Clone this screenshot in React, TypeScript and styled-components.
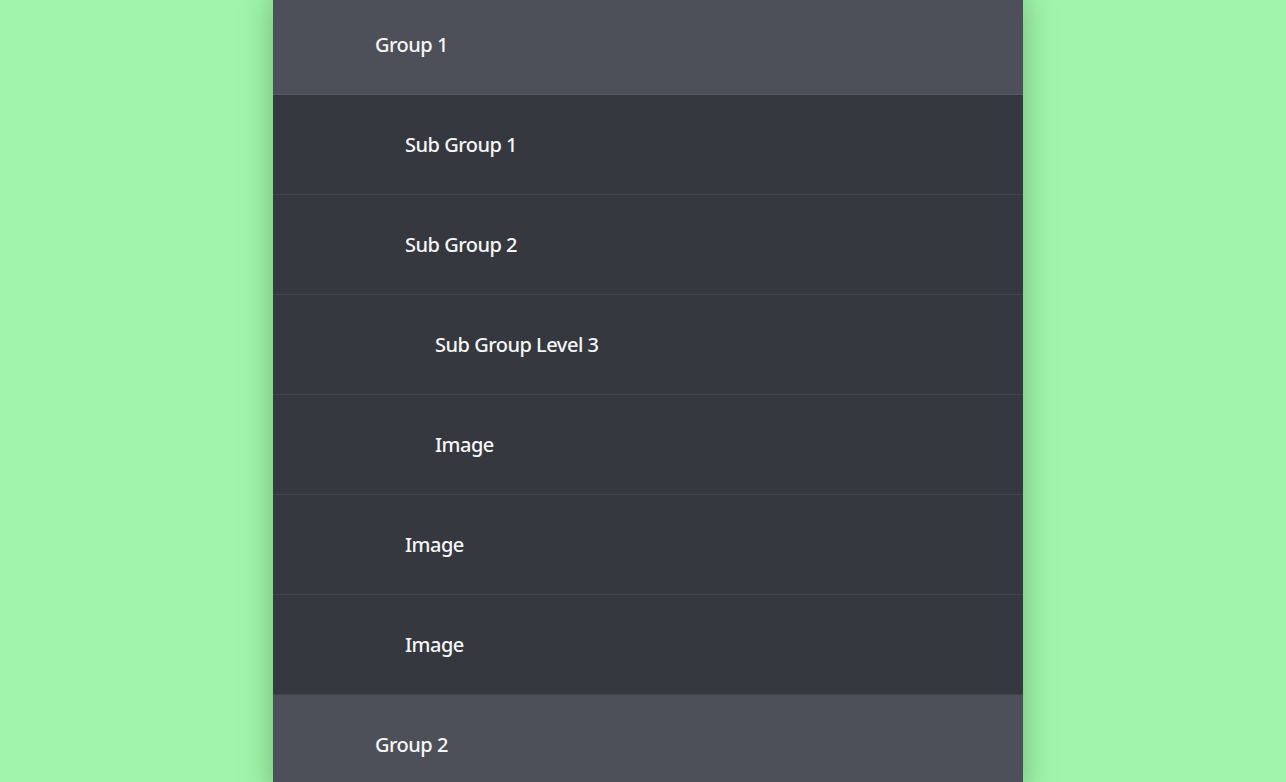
import React from "react";
import styled, { createGlobalStyle } from "styled-components";

const Global = createGlobalStyle`
  html, body { margin: 0; padding: 0; background: #a1f5ab; overflow: hidden; }
  body { font-family: "Noto Sans", "Open Sans", sans-serif; }
`;

const Page = styled.div`
  height: 782px;
  padding-left: 273px;
  overflow: hidden;
`;

const Panel = styled.div`
  width: 750px;
  margin-top: -5px;
  box-shadow: 0 0 30px rgba(20, 60, 25, 0.35);
  display: flex;
  flex-direction: column;
`;

const Row = styled.div<{ $level: number; $group?: boolean }>`
  height: 99px;
  border-bottom: 1px solid ${(p) => (p.$group ? "#575b63" : "#42454c")};
  background: ${(p) => (p.$group ? "#4d5058" : "#35383e")};
  display: flex;
  align-items: center;
  padding-left: ${(p) => 102 + p.$level * 30}px;
  color: #f6f6f6;
  font-size: 20px;
  font-weight: 500;
  letter-spacing: -0.5px;
`;

const items: { label: string; level: number; group?: boolean }[] = [
  { label: "Group 1", level: 0, group: true },
  { label: "Sub Group 1", level: 1 },
  { label: "Sub Group 2", level: 1 },
  { label: "Sub Group Level 3", level: 2 },
  { label: "Image", level: 2 },
  { label: "Image", level: 1 },
  { label: "Image", level: 1 },
  { label: "Group 2", level: 0, group: true },
];

export default function App() {
  return (
    <Page>
      <Global />
      <Panel>
        {items.map((it, i) => (
          <Row key={i} $level={it.level} $group={it.group}>
            {it.label}
          </Row>
        ))}
      </Panel>
    </Page>
  );
}
